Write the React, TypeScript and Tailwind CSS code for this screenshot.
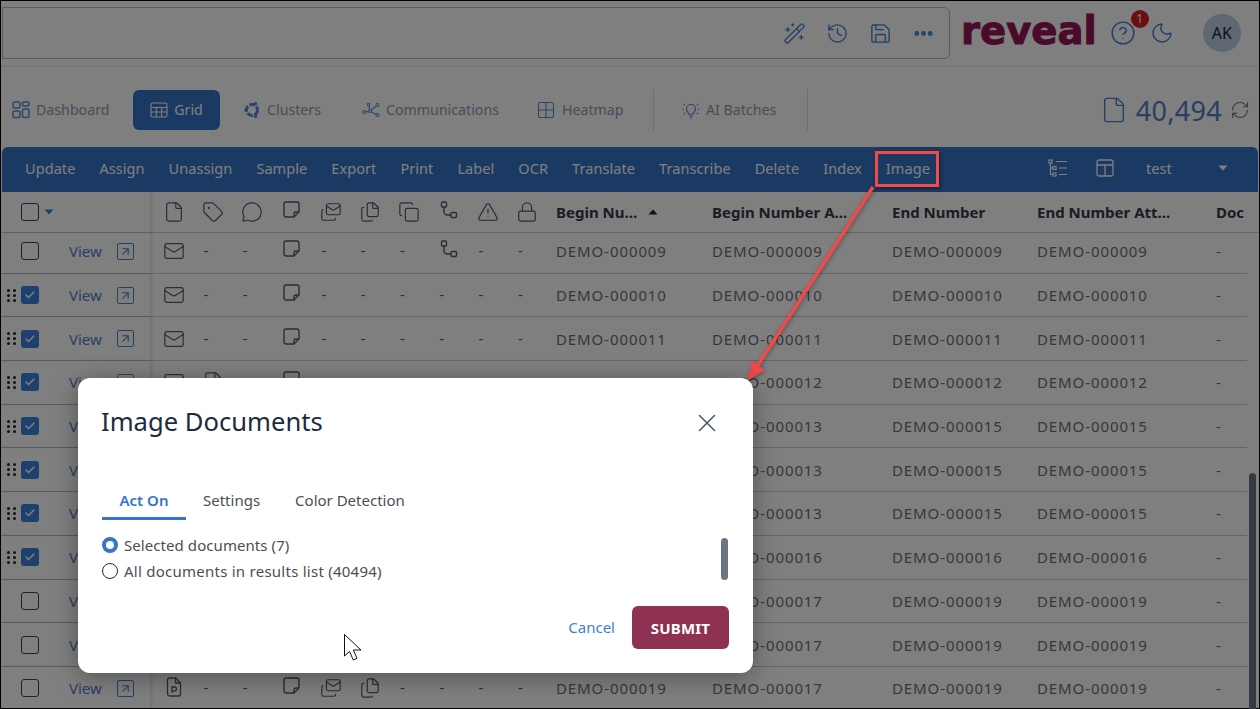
import React from "react";
import {
  WandSparkles, History, Save, CircleHelp, Moon, File, RefreshCw, Grid2x2, MessageCircle, Tag, Mail, Mails, Copy, Files, TriangleAlert, Lock, X, Check, ArrowUpRight, Ellipsis,
} from "lucide-react";

const font = { fontFamily: '"Noto Sans", sans-serif' };

function Dash() {
  return (
    <svg width="18" height="18" viewBox="0 0 18 18" fill="none" stroke="currentColor" strokeWidth="1.5">
      <rect x="1" y="1" width="7" height="6" rx="1.5" /><rect x="10.5" y="1" width="6.5" height="4" rx="1.5" />
      <rect x="1" y="10" width="7" height="6.5" rx="1.5" /><rect x="10.5" y="8" width="6.5" height="8.5" rx="1.5" />
    </svg>
  );
}
function GridIcon() {
  return (
    <svg width="18" height="16" viewBox="0 0 18 16" fill="none" stroke="currentColor" strokeWidth="1.1">
      <rect x="1" y="1" width="16" height="14" rx="1.5" /><path d="M1 5.500h16M1 10h16M6.300 5.500V15M11.700 5.500V15" />
    </svg>
  );
}
function ClusterIcon() {
  return (
    <svg width="18" height="18" viewBox="0 0 18 18" fill="none" stroke="currentColor">
      <circle cx="9" cy="9" r="5.500" strokeWidth="3" strokeDasharray="6 1.500" />
      <circle cx="3" cy="9" r="1.800" fill="currentColor" stroke="none" />
      <circle cx="12.500" cy="2.800" r="1.800" fill="currentColor" stroke="none" />
      <circle cx="12.500" cy="15.200" r="1.800" fill="currentColor" stroke="none" />
    </svg>
  );
}
function CommIcon() {
  return (
    <svg width="18" height="16" viewBox="0 0 18 16" fill="none" stroke="currentColor" strokeWidth="1.1">
      <circle cx="2.200" cy="10" r="1.500" /><circle cx="8" cy="9" r="1.500" /><circle cx="15.500" cy="3" r="1.500" /><circle cx="15.500" cy="13" r="1.500" /><circle cx="6.500" cy="2.500" r="1.300" />
      <path d="M3.700 10 6.500 9.400M9.200 8 14.300 4M9.400 9.800 14 12.400M7 3.800l.6 3.700" />
    </svg>
  );
}
function BulbIcon() {
  return (
    <svg width="18" height="18" viewBox="0 0 18 18" fill="none" stroke="currentColor" strokeWidth="1.2">
      <path d="M6.500 13c0-1.800-2-2.600-2-5a4.500 4.500 0 0 1 9 0c0 2.400-2 3.200-2 5zM7 15h4M8 17h2" />
      <path d="M.5 8H2M16 8h1.500M1.800 3l1.200 1M16.200 3 15 4M1.800 13l1.200-1M16.200 13 15 12" />
    </svg>
  );
}
function FlowIcon() {
  return (
    <svg width="18" height="18" viewBox="0 0 18 18" fill="none" stroke="currentColor" strokeWidth="1.400">
      <rect x="1.500" y="1" width="5" height="5" rx="1.200" /><rect x="11" y="11.500" width="5.500" height="5" rx="1.200" />
      <path d="M4 6v4.500a3.500 3.500 0 0 0 3.500 3.500H11" />
    </svg>
  );
}
function NoteIcon() {
  return (
    <svg width="17" height="17" viewBox="0 0 17 17" fill="none" stroke="currentColor" strokeWidth="1.400">
      <path d="M3 1h11a2 2 0 0 1 2 2v8l-5 5H3a2 2 0 0 1-2-2V3a2 2 0 0 1 2-2z" />
      <path d="M11 16v-3a2 2 0 0 1 2-2h3" />
    </svg>
  );
}
function FilePIcon() {
  return (
    <svg width="16" height="20" viewBox="0 0 16 20" fill="none" stroke="currentColor" strokeWidth="1.300">
      <path d="M3 1h6.500L14.500 6v11a2 2 0 0 1-2 2h-9a2 2 0 0 1-2-2V3a2 2 0 0 1 1.500-2z" />
      <path d="M9.500 1v5h5M6 16v-6h2.500a1.800 1.800 0 0 1 0 3.800H6" />
    </svg>
  );
}
function LayoutIcon() {
  return (
    <svg width="18" height="18" viewBox="0 0 18 18" fill="none" stroke="currentColor" strokeWidth="1.300">
      <rect x="1" y="1" width="16" height="16" rx="2" /><path d="M1 6h16M9 6v11" />
    </svg>
  );
}
function TreeIcon() {
  return (
    <svg width="20" height="18" viewBox="0 0 20 18" fill="none" stroke="currentColor" strokeWidth="1.200">
      <rect x="1" y="1" width="3" height="3" /><rect x="5" y="7.500" width="3" height="3" /><rect x="5" y="14" width="3" height="3" />
      <path d="M2.500 4v11.500H5M2.500 9H5M8 2.500h11M11 9h8M11 15.500h8" />
    </svg>
  );
}
function Caret({ up, className }: { up?: boolean; className?: string }) {
  return (
    <svg width="10" height="6" viewBox="0 0 10 6" fill="currentColor" className={className}>
      <path d={up ? "M5 0.500 9.500 5.500H.5z" : "M.5.500h9L5 5.500z"} />
    </svg>
  );
}
function Cursor() {
  return (
    <svg width="20" height="30" viewBox="0 0 20 30" fill="#fff" stroke="#111" strokeWidth="1">
      <path d="M1.500 1.500V23l5-4.500 3.800 8.500 3.700-1.700-3.700-8.300H18z" />
    </svg>
  );
}
function Box({ checked }: { checked?: boolean }) {
  return checked ? (
    <span className="flex h-[18px] w-[18px] items-center justify-center rounded-[3px] bg-[#3a80d8] text-white">
      <Check size={12} strokeWidth={3} />
    </span>
  ) : (
    <span className="block h-[18px] w-[18px] rounded-[3px] border-[1.5px] border-[#3b4450] bg-white" />
  );
}
function Grip() {
  return (
    <span className="grid w-[9px] grid-cols-2 gap-x-[3px] gap-y-[2px]">
      {Array.from({ length: 6 }).map((_, i) => (
        <span key={i} className="h-[3px] w-[3px] rounded-full bg-[#20262e]" />
      ))}
    </span>
  );
}

const tabs = [
  { t: "Dashboard", i: <Dash />, w: "w-[133px]", pad: "pl-[12px]" },
  { t: "Grid", i: <GridIcon />, w: "w-[87px]", on: true, pad: "justify-center" },
  { t: "Clusters", i: <ClusterIcon />, w: "w-[130px]", pad: "pl-[23px]" },
  { t: "Communications", i: <CommIcon />, w: "w-[177px]", pad: "pl-[12px]" },
  { t: "Heatmap", i: <Grid2x2 size={20} strokeWidth={1.3} />, w: "w-[126px]", pad: "pl-[9px]" },
];
const actions = ["Update", "Assign", "Unassign", "Sample", "Export", "Print", "Label", "OCR", "Translate", "Transcribe", "Delete", "Index"];
const IC = { size: 22, strokeWidth: 1.3 };
const heads = [<File {...IC} />, <Tag {...IC} />, <MessageCircle {...IC} />, <NoteIcon />, <Mails {...IC} />, <Files {...IC} />, <Copy {...IC} />, <FlowIcon />, <TriangleAlert {...IC} />, <Lock {...IC} />];
const M = <Mail {...IC} />, N = <NoteIcon />;
type R = { sel?: boolean; ic: (React.ReactNode | string)[]; a: string; b: string; c: string; d: string };
const rows: R[] = [
  { ic: [M, "-", "-", N, "-", "-", "-", <FlowIcon />, "-", "-"], a: "000009", b: "000009", c: "000009", d: "000009" },
  { sel: true, ic: [M, "-", "-", N, "-", "-", "-", "-", "-", "-"], a: "000010", b: "000010", c: "000010", d: "000010" },
  { sel: true, ic: [M, "-", "-", N, "-", "-", "-", "-", "-", "-"], a: "000011", b: "000011", c: "000011", d: "000011" },
  { sel: true, ic: [M, <File {...IC} />, "-", N, "-", "-", "-", "-", "-", "-"], a: "000012", b: "000012", c: "000012", d: "000012" },
  { sel: true, ic: [M, "-", "-", N, "-", "-", "-", "-", "-", "-"], a: "000013", b: "000013", c: "000015", d: "000015" },
  { sel: true, ic: [M, "-", "-", N, "-", "-", "-", "-", "-", "-"], a: "000014", b: "000013", c: "000015", d: "000015" },
  { sel: true, ic: [M, "-", "-", N, "-", "-", "-", "-", "-", "-"], a: "000015", b: "000013", c: "000015", d: "000015" },
  { sel: true, ic: [M, "-", "-", N, "-", "-", "-", "-", "-", "-"], a: "000016", b: "000016", c: "000016", d: "000016" },
  { ic: [M, "-", "-", N, "-", "-", "-", "-", "-", "-"], a: "000017", b: "000017", c: "000019", d: "000019" },
  { ic: [M, "-", "-", N, "-", "-", "-", "-", "-", "-"], a: "000018", b: "000017", c: "000019", d: "000019" },
  { ic: [<FilePIcon />, "-", "-", N, <Mails {...IC} />, <Files {...IC} />, "-", "-", "-", "-"], a: "000019", b: "000017", c: "000019", d: "000019" },
];

export default function App() {
  return (
    <div className="relative h-[709px] w-[1260px] overflow-hidden bg-white text-[15px] leading-5 text-[#6b7078]" style={font}>
      {/* Top bar */}
      <header className="flex h-[67px] items-center border-b border-[#e2e4e8] pl-[2px]">
        <div className="flex h-[52px] w-[948px] items-center justify-end gap-[20px] rounded-r-md border border-[#b4b8be] pr-[14px] text-[#3f7fd0]">
          <WandSparkles size={23} strokeWidth={1.4} />
          <History size={23} strokeWidth={1.4} />
          <Save size={23} strokeWidth={1.4} />
          <Ellipsis size={23} strokeWidth={3} />
        </div>
        <span className="-mt-[3px] ml-[11px] text-[38.6px] font-bold leading-none text-[#941654] [-webkit-text-stroke:1px_#941654]" style={{ fontFamily: '"DejaVu Sans", sans-serif' }}>reveal</span>
        <span className="relative ml-[13px] text-[#3f7fd0]">
          <CircleHelp size={26} strokeWidth={1.3} />
          <span className="absolute left-[21px] -top-[10px] flex h-[18px] w-[18px] items-center justify-center rounded-full bg-[#d42020] text-[12px] text-white">1</span>
        </span>
        <Moon size={24} strokeWidth={1.4} className="ml-[14px] text-[#3f7fd0]" />
        <span className="ml-[29px] flex h-[38px] w-[38px] items-center justify-center rounded-full bg-[#bcd0ea] text-[16px] text-[#222]">AK</span>
      </header>

      {/* Tabs */}
      <nav className="flex h-[80px] items-center pt-[6px] text-[14.2px] text-[#8c9bb4]">
        {tabs.map((t) => (
          <div key={t.t} className={`flex h-[40px] items-center gap-[6px] ${t.w} ${t.pad} ${t.on ? "rounded-md bg-[#3574c8] text-white" : ""}`}>
            <span className={t.on ? "text-white" : "text-[#5a8ad0]"}>{t.i}</span>
            <span>{t.t}</span>
          </div>
        ))}
        <span className="h-[42px] w-px bg-[#d8dade]" />
        <div className="flex h-[40px] w-[153px] items-center gap-[6px] pl-[28px]">
          <span className="text-[#5a8ad0]"><BulbIcon /></span>
          <span>AI Batches</span>
        </div>
        <span className="h-[42px] w-px bg-[#d8dade]" />
        <div className="ml-auto flex items-center gap-[8px] pr-[10px] text-[#4d80c8]">
          <File size={28} strokeWidth={1.200} />
          <span className="text-[27px] leading-none tracking-[0.3px]">40,494</span>
          <RefreshCw size={20} strokeWidth={1.300} className="text-[#707a88]" />
        </div>
      </nav>

      {/* Action bar */}
      <div className="mx-[2px] flex h-[45px] items-center gap-[24px] rounded-t-md bg-[#3574c8] pb-[3px] pl-[23px] text-[14.5px] tracking-[0.07px] text-white">
        {actions.map((a) => <span key={a}>{a}</span>)}
        <span>Image</span>
        <span className="ml-[94px]"><TreeIcon /></span>
        <span className="ml-[4px]"><LayoutIcon /></span>
        <span className="ml-[8px]">test</span>
        <Caret className="ml-[22px]" />
      </div>

      {/* Table */}
      <div className="relative z-10 flex h-[41px] items-center border-b border-[#c8cace] bg-white font-bold text-[#383848]">
        <div className="flex h-full w-[150px] shrink-0 items-center gap-[5px] pl-[21px] shadow-[2px_0_3px_rgba(0,0,0,0.12)]">
          <Box /><Caret className="text-[#3f7fd8]" />
        </div>
        <div className="flex w-[393px] shrink-0 font-normal text-[#555b66]">
          {heads.map((h, i) => <span key={i} className="flex w-[39.3px] justify-center pl-[8px]">{h}</span>)}
        </div>
        <span className="flex w-[156px] shrink-0 items-center gap-[11px] pl-[13px]">Begin Nu...<Caret up className="text-[#222]" /></span>
        <span className="w-[180px] shrink-0 pl-[13px]">Begin Number A...</span>
        <span className="w-[145px] shrink-0 pl-[13px]">End Number</span>
        <span className="w-[179px] shrink-0 pl-[13px]">End Number Att...</span>
        <span className="pl-[13px]">Doc</span>
      </div>
      <div className="-mt-[3px] w-[1247px]">
        {rows.map((r) => (
          <div key={r.a} className="flex h-[43.7px] items-center border-b border-[#c8cace]">
            <div className="flex h-full w-[150px] shrink-0 items-center shadow-[2px_0_3px_rgba(0,0,0,0.12)]">
              <span className="flex w-[21px] justify-center pl-[1px]">{r.sel && <Grip />}</span>
              <Box checked={r.sel} />
              <span className="ml-[30px] text-[#4d80c8]">View</span>
              <span className="ml-[15px] flex h-[17px] w-[17px] items-center justify-center rounded-[2px] border-[1.5px] border-[#4d80c8] text-[#4d80c8]">
                <ArrowUpRight size={13} strokeWidth={2} />
              </span>
            </div>
            <div className="flex w-[393px] shrink-0 text-[#555b66]">
              {r.ic.map((c, i) =>
                typeof c === "string"
                  ? <span key={i} className="flex w-[39.3px] justify-center pr-[6px]">{c}</span>
                  : <span key={i} className="flex w-[39.3px] justify-center pl-[8px]">{c}</span>
              )}
            </div>
            <span className="w-[156px] shrink-0 pl-[13px] tracking-[0.9px]">DEMO-{r.a}</span>
            <span className="w-[180px] shrink-0 pl-[13px] tracking-[0.9px]">DEMO-{r.b}</span>
            <span className="w-[145px] shrink-0 pl-[13px] tracking-[0.9px]">DEMO-{r.c}</span>
            <span className="w-[179px] shrink-0 pl-[13px] tracking-[0.9px]">DEMO-{r.d}</span>
            <span className="pl-[13px]">-</span>
          </div>
        ))}
      </div>

      {/* Dim overlay */}
      <div className="absolute inset-0 z-20 border border-black bg-black/50" />

      {/* page scrollbar */}
      <div className="absolute left-[1249px] top-[473px] z-20 h-[240px] w-[7px] rounded-t-full bg-[#353942]" />

      {/* callout */}
      <div className="absolute left-[875px] top-[151px] z-20 h-[36px] w-[64px] border-[3px] border-[#f04a4a] shadow-[1px_1px_4px_rgba(0,0,0,0.5)]" />
      <svg className="absolute left-0 top-0 z-20 drop-shadow-[1px_1px_2px_rgba(0,0,0,0.35)]" width="1260" height="709" fill="none">
        <path d="M873 187 756 368" stroke="#f04a4a" strokeWidth="3.500" />
        <path d="M747 381 752 361 765 370z" fill="#f04a4a" />
      </svg>

      {/* Modal */}
      <div className="absolute left-[78px] top-[378px] z-30 flex h-[295px] w-[675px] flex-col rounded-[12px] bg-white px-[24px] text-[#4a4f57] shadow-[0_4px_24px_rgba(0,0,0,0.35)]">
        <div className="flex h-[88px] items-center justify-between pr-[7px]">
          <span className="-ml-px text-[25.6px] text-[#1d2a3f]">Image Documents</span>
          <X size={30} strokeWidth={1.300} className="mt-[2px] text-[#4f5a6b]" />
        </div>
        <div className="mt-[17px] flex h-[37px] items-center">
          <span className="flex h-full w-[84px] items-center justify-center border-b-[3px] border-[#3574c8] pb-[1px] font-semibold text-[#3574c8]">Act On</span>
          <span className="mb-[3px] ml-[17px]">Settings</span>
          <span className="mb-[3px] ml-[35px]">Color Detection</span>
        </div>
        <div className="relative mt-[15px] flex flex-col gap-[6px]">
          <label className="flex h-[20px] items-center gap-[6px]">
            <span className="h-4 w-4 rounded-full border-[4.5px] border-[#3574c8] bg-white" /><span className="tracking-[0.07px]">Selected documents (7)</span>
          </label>
          <label className="flex h-[20px] items-center gap-[6px]">
            <span className="h-4 w-4 rounded-full border-[1.5px] border-[#1d2a3f] bg-white" /><span className="tracking-[0.25px]">All documents in results list (40494)</span>
          </label>
          <span className="absolute right-[1px] top-[3px] h-[42px] w-[7px] rounded-full bg-[#6b7585]" />
        </div>
        <div className="mt-[25px] flex items-center justify-end gap-[17px]">
          <span className="mb-[2px] text-[#3f7fd0]">Cancel</span>
          <span className="flex h-[43px] w-[97px] items-center justify-center rounded-md bg-[#8e3152] font-bold tracking-[0.2px] text-white">SUBMIT</span>
        </div>
        <span className="absolute left-[265px] top-[255px]"><Cursor /></span>
      </div>
    </div>
  );
}
